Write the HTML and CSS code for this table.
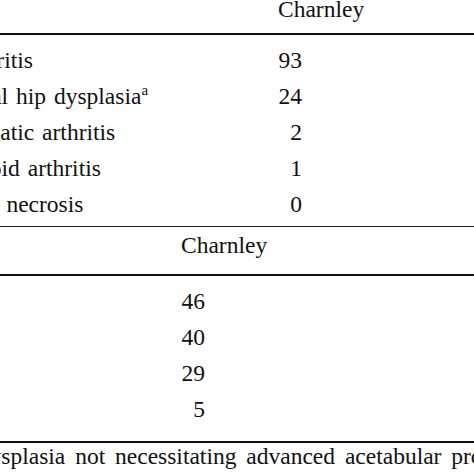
FILE: index.html
```html
<!DOCTYPE html>
<html>
<head>
<meta charset="utf-8">
<link rel="stylesheet" href="styles.css">
</head>
<body>
<div class="page">
  <div class="t1 head">
    <div class="lab"></div>
    <div class="val">Charnley</div>
  </div>
  <div class="t1 body rule-thin">
    <div class="lab">Osteoarthritis</div><div class="val"><span class="num">93</span></div>
    <div class="lab">Congenital hip dysplasia<sup>a</sup></div><div class="val"><span class="num">24</span></div>
    <div class="lab">Posttraumatic arthritis</div><div class="val"><span class="num">2</span></div>
    <div class="lab">Rheumatoid arthritis</div><div class="val"><span class="num">1</span></div>
    <div class="lab">Avascular necrosis</div><div class="val"><span class="num">0</span></div>
  </div>
  <div class="t2 head2">
    <div class="lab"></div>
    <div class="val">Charnley</div>
  </div>
  <div class="t2 body2">
    <div class="lab"></div><div class="val"><span class="num">46</span></div>
    <div class="lab"></div><div class="val"><span class="num">40</span></div>
    <div class="lab"></div><div class="val"><span class="num">29</span></div>
    <div class="lab"></div><div class="val"><span class="num">5</span></div>
  </div>
  <p class="foot"><sup>a</sup>Hip dysplasia not necessitating advanced acetabular procedures</p>
</div>
</body>
</html>
```
FILE: styles.css
```css
html, body {
  margin: 0;
  padding: 0;
  background: #ffffff;
  overflow: hidden;
}
body {
  width: 474px;
  height: 474px;
}
.page {
  width: 820px;
  margin-left: -95px;
  margin-top: -9px;
  font-family: "Liberation Serif", "Times New Roman", serif;
  font-size: 23.5px;
  line-height: 36px;
  color: #111111;
}
.t1 {
  display: grid;
  grid-template-columns: 373px auto;
}
.t2 {
  display: grid;
  grid-template-columns: 276px auto;
}
.head {
  padding-bottom: 6px;
  border-bottom: 2px solid #111111;
}
.body {
  padding-top: 7px;
  padding-bottom: 4px;
}
.rule-thin {
  border-bottom: 1px solid #222222;
}
.head2 {
  padding-bottom: 11px;
  border-bottom: 2px solid #111111;
}
.body2 {
  padding-top: 7px;
  padding-bottom: 14px;
  border-bottom: 2px solid #111111;
}
.lab {
  white-space: nowrap;
  word-spacing: 2px;
}
.val {
  white-space: nowrap;
}
.num {
  display: inline-block;
  width: 24px;
  text-align: right;
}
sup {
  font-size: 15px;
  line-height: 0;
  vertical-align: 9px;
}
.foot {
  margin: 0 0 0 21px;
  line-height: 26px;
  white-space: nowrap;
  word-spacing: 4px;
}
```
